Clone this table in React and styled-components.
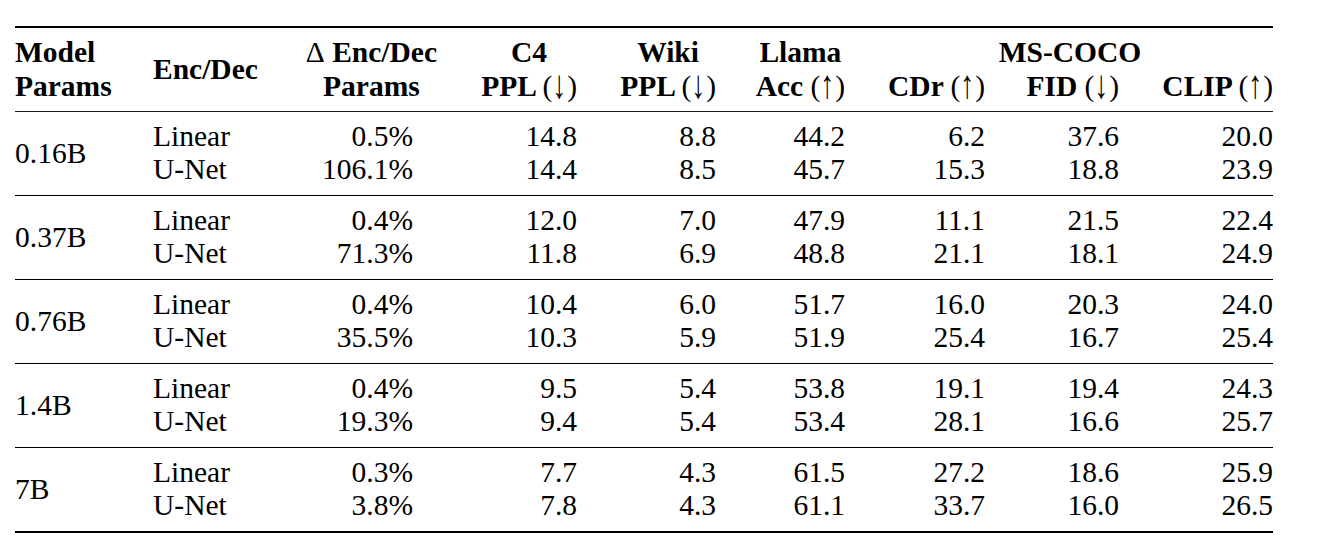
import React from "react";
import styled, { createGlobalStyle } from "styled-components";

const GlobalStyle = createGlobalStyle`
  html, body {
    margin: 0;
    padding: 0;
    background: #fff;
  }
  body {
    font-family: "Liberation Serif", "Times New Roman", serif;
    color: #000;
  }
`;

const columns = [138, 137, 147, 140, 139, 129, 140, 134, 154];

const groups = [
  { size: "0.16B", rows: [["Linear", "0.5%", "14.8", "8.8", "44.2", "6.2", "37.6", "20.0"], ["U-Net", "106.1%", "14.4", "8.5", "45.7", "15.3", "18.8", "23.9"]] },
  { size: "0.37B", rows: [["Linear", "0.4%", "12.0", "7.0", "47.9", "11.1", "21.5", "22.4"], ["U-Net", "71.3%", "11.8", "6.9", "48.8", "21.1", "18.1", "24.9"]] },
  { size: "0.76B", rows: [["Linear", "0.4%", "10.4", "6.0", "51.7", "16.0", "20.3", "24.0"], ["U-Net", "35.5%", "10.3", "5.9", "51.9", "25.4", "16.7", "25.4"]] },
  { size: "1.4B", rows: [["Linear", "0.4%", "9.5", "5.4", "53.8", "19.1", "19.4", "24.3"], ["U-Net", "19.3%", "9.4", "5.4", "53.4", "28.1", "16.6", "25.7"]] },
  { size: "7B", rows: [["Linear", "0.3%", "7.7", "4.3", "61.5", "27.2", "18.6", "25.9"], ["U-Net", "3.8%", "7.8", "4.3", "61.1", "33.7", "16.0", "26.5"]] },
];

const Page = styled.div`
  padding: 26px 0 0 15px;
`;

const Table = styled.table`
  border-collapse: collapse;
  table-layout: fixed;
  width: 1258px;
  font-size: 29.5px;
`;

const Col = styled.col`
  width: ${(p) => p.$w}px;
`;

const Head = styled.thead`
  border-top: 2px solid #000;
  border-bottom: 1px solid #1a1a1a;
`;

const Group = styled.tbody`
  border-top: 1px solid #000;
  &:last-child {
    border-bottom: 2px solid #000;
  }
`;

const HeadCell = styled.th`
  padding: ${(p) => (p.$top ? "7px" : "0")} 0 ${(p) => (p.$bottom ? "8px" : "0")} ${(p) => p.$indent || 0}px;
  font-weight: 700;
  line-height: 34px;
  text-align: ${(p) => p.$align || "right"};
  vertical-align: ${(p) => p.$valign || "top"};
  white-space: nowrap;
`;

const Stack = styled.span`
  display: inline-flex;
  flex-direction: column;
  align-items: ${(p) => (p.$left ? "flex-start" : "center")};
`;

const Plain = styled.span`
  font-weight: 400;
`;

const ArrowGlyph = styled.span`
  display: inline-block;
  font-weight: 400;
  line-height: 24px;
  transform: scale(0.95, 1.35);
  transform-origin: 50% 65%;
`;

const Cell = styled.td`
  padding: ${(p) => (p.$first ? "8px" : "0")} ${(p) => p.$gap || 0}px ${(p) => (p.$last ? "9px" : "0")} 0;
  line-height: 33px;
  text-align: ${(p) => p.$align || "right"};
  vertical-align: middle;
  white-space: nowrap;
`;

const Arrow = ({ dir }) => (
  <Plain>
    (<ArrowGlyph>{dir}</ArrowGlyph>)
  </Plain>
);

const Metric = ({ top, name, arrow }) => (
  <Stack>
    <span>{top}</span>
    <span>
      {name} <Arrow dir={arrow} />
    </span>
  </Stack>
);

export default function App() {
  return (
    <Page>
      <GlobalStyle />
      <Table>
        <colgroup>
          {columns.map((w, i) => (
            <Col key={i} $w={w} />
          ))}
        </colgroup>
        <Head>
          <tr>
            <HeadCell rowSpan={2} $top $bottom $align="left">
              <Stack $left>
                <span>Model</span>
                <span>Params</span>
              </Stack>
            </HeadCell>
            <HeadCell rowSpan={2} $top $bottom $align="left" $valign="middle">
              Enc/Dec
            </HeadCell>
            <HeadCell rowSpan={2} $top $bottom>
              <Stack>
                <span>
                  <Plain>Δ</Plain> Enc/Dec
                </span>
                <span>Params</span>
              </Stack>
            </HeadCell>
            <HeadCell rowSpan={2} $top $bottom>
              <Metric top="C4" name="PPL" arrow="↓" />
            </HeadCell>
            <HeadCell rowSpan={2} $top $bottom>
              <Metric top="Wiki" name="PPL" arrow="↓" />
            </HeadCell>
            <HeadCell rowSpan={2} $top $bottom>
              <Metric top="Llama" name="Acc" arrow="↑" />
            </HeadCell>
            <HeadCell colSpan={3} $top $align="center" $indent={22}>
              MS-COCO
            </HeadCell>
          </tr>
          <tr>
            <HeadCell $bottom>
              CDr <Arrow dir="↑" />
            </HeadCell>
            <HeadCell $bottom>
              FID <Arrow dir="↓" />
            </HeadCell>
            <HeadCell $bottom>
              CLIP <Arrow dir="↑" />
            </HeadCell>
          </tr>
        </Head>
        {groups.map((g) => (
          <Group key={g.size}>
            {g.rows.map((row, ri) => (
              <tr key={ri}>
                {ri === 0 && (
                  <Cell rowSpan={2} $first $last $align="left">
                    {g.size}
                  </Cell>
                )}
                {row.map((v, ci) => (
                  <Cell
                    key={ci}
                    $first={ri === 0}
                    $last={ri === 1}
                    $align={ci === 0 ? "left" : "right"}
                    $gap={ci === 1 ? 24 : 0}
                  >
                    {v}
                  </Cell>
                ))}
              </tr>
            ))}
          </Group>
        ))}
      </Table>
    </Page>
  );
}
